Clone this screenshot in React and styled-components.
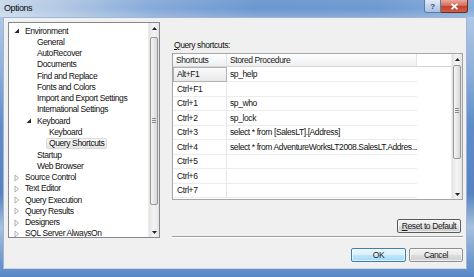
import React from 'react';
import styled, { createGlobalStyle } from 'styled-components';

const GlobalStyle = createGlobalStyle`
  html, body { margin: 0; padding: 0; }
  body {
    font-family: "Liberation Sans", Arial, sans-serif;
    font-size: 8.5px;
    color: #111;
    letter-spacing: -0.4px;
  }
`;

const treeItems = [
    { label: 'Environment', level: 0, exp: 'open' },
    { label: 'General', level: 1 },
    { label: 'AutoRecover', level: 1 },
    { label: 'Documents', level: 1 },
    { label: 'Find and Replace', level: 1 },
    { label: 'Fonts and Colors', level: 1 },
    { label: 'Import and Export Settings', level: 1 },
    { label: 'International Settings', level: 1 },
    { label: 'Keyboard', level: 1, exp: 'open' },
    { label: 'Keyboard', level: 2 },
    { label: 'Query Shortcuts', level: 2, selected: true },
    { label: 'Startup', level: 1 },
    { label: 'Web Browser', level: 1 },
    { label: 'Source Control', level: 0, exp: 'closed' },
    { label: 'Text Editor', level: 0, exp: 'closed' },
    { label: 'Query Execution', level: 0, exp: 'closed' },
    { label: 'Query Results', level: 0, exp: 'closed' },
    { label: 'Designers', level: 0, exp: 'closed' },
    { label: 'SQL Server AlwaysOn', level: 0, exp: 'closed' },
];

const shortcuts = [
    ['Alt+F1', 'sp_help'],
    ['Ctrl+F1', ''],
    ['Ctrl+1', 'sp_who'],
    ['Ctrl+2', 'sp_lock'],
    ['Ctrl+3', 'select * from [SalesLT].[Address]'],
    ['Ctrl+4', 'select * from AdventureWorksLT2008.SalesLT.Addres...'],
    ['Ctrl+5', ''],
    ['Ctrl+6', ''],
    ['Ctrl+7', ''],
];

function Expander({ type }) {
    if (type === 'open') {
        return (
            <svg width="6" height="6" viewBox="0 0 6 6">
                <path d="M5 0.5 L5 5 L0.5 5 Z" fill="#262626" />
            </svg>
        );
    }
    if (type === 'closed') {
        return (
            <svg width="6" height="8" viewBox="0 0 6 8">
                <path d="M1 1 L4.5 4 L1 7 Z" fill="#fff" stroke="#a6a6a6" strokeWidth="0.9" />
            </svg>
        );
    }
    return null;
}

function ScrollBar({ thumbTop, thumbHeight, gripAt }) {
    return (
        <VScroll>
            <ArrowBox>
                <svg width="5" height="3" viewBox="0 0 5 3"><path d="M0 3 L2.5 0 L5 3 Z" fill="#222" /></svg>
            </ArrowBox>
            <Track>
                <Thumb $top={thumbTop} $height={thumbHeight}>
                    <Grip $at={gripAt}>
                        <span /><span /><span />
                    </Grip>
                </Thumb>
            </Track>
            <ArrowBox>
                <svg width="5" height="3" viewBox="0 0 5 3"><path d="M0 0 L2.5 3 L5 0 Z" fill="#222" /></svg>
            </ArrowBox>
        </VScroll>
    );
}

function App() {
    return (
        <>
            <GlobalStyle />
            <Window>
                <TitleBar>
                    <Title>Options</Title>
                    <HelpBtn>?</HelpBtn>
                    <CloseBtn>
                        <svg width="9" height="7" viewBox="0 0 9 7">
                            <path d="M1.5 0.8 L7.5 6.2 M7.5 0.8 L1.5 6.2" stroke="#fff" strokeWidth="1.8" />
                        </svg>
                    </CloseBtn>
                </TitleBar>

                <Client>
                    <Main>
                        <Tree>
                            <TreeList>
                                {treeItems.map((item, i) => (
                                    <TreeRow key={i} $level={item.level}>
                                        <ExpSlot><Expander type={item.exp} /></ExpSlot>
                                        <TreeLabel $selected={item.selected}>{item.label}</TreeLabel>
                                    </TreeRow>
                                ))}
                            </TreeList>
                            <ScrollBar thumbTop={4} thumbHeight={168} gripAt={80} />
                        </Tree>

                        <RightPane>
                            <PaneLabel><u>Q</u>uery shortcuts:</PaneLabel>
                            <GridBox>
                                <Table>
                                    <HeaderRow>
                                        <HeadCell>Shortcuts</HeadCell>
                                        <HeadCell>Stored Procedure</HeadCell>
                                    </HeaderRow>
                                    {shortcuts.map(([key, proc], i) => (
                                        <DataRow key={i}>
                                            <KeyCell $focused={i === 0}>{key}</KeyCell>
                                            <ProcCell>{proc}</ProcCell>
                                        </DataRow>
                                    ))}
                                </Table>
                                <ScrollBar thumbTop={1} thumbHeight={94} gripAt={42} />
                            </GridBox>
                            <ResetRow>
                                <Button $width={64} $focused><u>R</u>eset to Default</Button>
                            </ResetRow>
                            <Separator />
                        </RightPane>
                    </Main>

                    <Footer>
                        <Button $width={55} $primary>OK</Button>
                        <Button $width={54}>Cancel</Button>
                    </Footer>
                </Client>
            </Window>
        </>
    );
}

const Window = styled.div`
    width: 474px;
    height: 277px;
    display: flex;
    flex-direction: column;
    overflow: hidden;
    background: linear-gradient(to bottom, #b9cfe9 0%, #8fb0db 25%, #5f8dca 45%, #5683c2 70%, #a9c0dd 82%, #6b96cd 95%, #5a88c6 100%);
`;

const TitleBar = styled.div`
    height: 17px;
    flex: none;
    display: flex;
    align-items: flex-start;
    padding-right: 6px;
    background:
        linear-gradient(to bottom, rgba(255,255,255,0.05) 0%, rgba(255,255,255,0) 50%, rgba(255,255,255,0.18) 100%),
        linear-gradient(to right, #c8d8ea 0%, #b3c9e4 12%, #86aad9 32%, #6a97d0 55%, #6e9ad1 80%, #88acd9 100%);
`;

const Title = styled.div`
    flex: 1;
    padding-left: 4px;
    line-height: 17px;
    font-size: 9px;
    color: #0b0b0b;
`;

const HelpBtn = styled.div`
    width: 17px;
    height: 13px;
    box-sizing: border-box;
    display: flex;
    align-items: center;
    justify-content: center;
    border: 1px solid #5c7ca6;
    border-top: none;
    border-radius: 0 0 0 3px;
    background: linear-gradient(to bottom, #e3ecf6 0%, #c4d5ea 50%, #a9c1e0 100%);
    color: #2c4a72;
    font-size: 8px;
    font-weight: bold;
`;

const CloseBtn = styled.div`
    width: 27px;
    height: 13px;
    box-sizing: border-box;
    display: flex;
    align-items: center;
    justify-content: center;
    border: 1px solid #6a2b22;
    border-top: none;
    border-left: none;
    border-radius: 0 0 3px 0;
    background: linear-gradient(to bottom, #e9a89b 0%, #d4705f 45%, #c3402c 55%, #d0614a 100%);
`;

const Client = styled.div`
    flex: 1;
    margin: 0 7px 8px 3px;
    display: flex;
    flex-direction: column;
    background: #f0f0f0;
    border: 1px solid #9eb6d3;
    border-bottom-color: #c9d6e6;
`;

const Main = styled.div`
    display: flex;
    height: 216px;
    margin: 4px 0 0 4px;
`;

const Tree = styled.div`
    width: 152px;
    box-sizing: border-box;
    display: flex;
    border: 1px solid #828790;
    background: #fff;
`;

const TreeList = styled.div`
    flex: 1;
    padding-top: 2.5px;
    overflow: hidden;
`;

const TreeRow = styled.div`
    height: 11.28px;
    display: flex;
    align-items: center;
    padding-left: ${p => 4 + p.$level * 12}px;
    white-space: nowrap;
`;

const ExpSlot = styled.span`
    width: 12px;
    flex: none;
    display: flex;
    align-items: center;
    padding-left: 1px;
    box-sizing: border-box;
`;

const TreeLabel = styled.span`
    margin-left: -3px;
    padding: 0 2px;
    line-height: 9px;
    border: 1px solid ${p => (p.$selected ? '#d9d9d9' : 'transparent')};
    background: ${p => (p.$selected ? 'linear-gradient(to bottom, #f8f8f8, #e5e5e5)' : 'transparent')};
    border-radius: 2px;
`;

const VScroll = styled.div`
    width: 10px;
    flex: none;
    display: flex;
    flex-direction: column;
    background: linear-gradient(to right, #e3e3e3, #f2f2f2 40%, #f2f2f2 60%, #e3e3e3);
    border-left: 1px solid #ececec;
`;

const ArrowBox = styled.div`
    height: 10px;
    flex: none;
    display: flex;
    align-items: center;
    justify-content: center;
`;

const Track = styled.div`
    flex: 1;
    position: relative;
`;

const Thumb = styled.div`
    margin: ${p => p.$top}px 0 0 0.5px;
    width: 8px;
    height: ${p => p.$height}px;
    box-sizing: border-box;
    border: 1px solid #979797;
    border-radius: 2px;
    background: linear-gradient(to right, #f5f5f5 0%, #e7e7e7 50%, #d7d7d7 100%);
    position: relative;
`;

const Grip = styled.div`
    position: absolute;
    left: 1.5px;
    top: ${p => p.$at}px;
    display: flex;
    flex-direction: column;
    gap: 1px;

    span {
        display: block;
        width: 4px;
        height: 1px;
        background: #8a8a8a;
    }
`;

const RightPane = styled.div`
    width: 291px;
    margin-left: 12px;
    display: flex;
    flex-direction: column;
`;

const PaneLabel = styled.div`
    margin-top: 18px;
    line-height: 10px;
    height: 10px;
    padding-left: 2px;
`;

const GridBox = styled.div`
    margin-top: 3px;
    height: 148px;
    box-sizing: border-box;
    display: flex;
    border: 1px solid #a5a5a5;
    background: #fff;
`;

const Table = styled.div`
    flex: 1;
    overflow: hidden;
`;

const HeaderRow = styled.div`
    display: grid;
    grid-template-columns: 54px 190px;
    height: 12px;
    border-bottom: 1px solid #d5d5d5;
`;

const HeadCell = styled.div`
    line-height: 12px;
    padding-left: 3px;
    background: linear-gradient(to bottom, #ffffff 0%, #f6f7f8 50%, #eceef0 100%);
    border-right: 1px solid #e3e3e3;
    color: #222;
`;

const DataRow = styled.div`
    display: grid;
    grid-template-columns: 54px 190px;
    height: 14.5px;
`;

const KeyCell = styled.div`
    box-sizing: border-box;
    line-height: 13px;
    padding-left: 3px;
    border: 1px solid ${p => (p.$focused ? '#b3b3b3' : 'transparent')};
    border-bottom-color: ${p => (p.$focused ? '#b3b3b3' : '#ececec')};
    border-right-color: ${p => (p.$focused ? '#b3b3b3' : '#e6e6e6')};
    background: ${p => (p.$focused ? 'linear-gradient(to bottom, #fafafa, #e9e9e9)' : 'transparent')};
`;

const ProcCell = styled.div`
    box-sizing: border-box;
    line-height: 13px;
    padding: 1px 0 0 3px;
    border-bottom: 1px solid #ececec;
    white-space: nowrap;
    overflow: hidden;
`;

const ResetRow = styled.div`
    margin-top: 19px;
    display: flex;
    justify-content: flex-end;
    padding-right: 2px;
`;

const Button = styled.div`
    width: ${p => p.$width}px;
    height: 14px;
    box-sizing: border-box;
    display: flex;
    align-items: center;
    justify-content: center;
    border-radius: 2px;
    border: 1px solid ${p => (p.$primary ? '#3c7fb1' : p.$focused ? '#5a5a5a' : '#8e8f8f')};
    background: ${p => (p.$primary
        ? 'linear-gradient(to bottom, #eaf6fd 0%, #d9f0fc 50%, #bee6fd 51%, #a7d9f5 100%)'
        : 'linear-gradient(to bottom, #f2f2f2 0%, #ebebeb 50%, #dddddd 51%, #cfcfcf 100%)')};
    box-shadow: inset 0 0 0 1px rgba(255,255,255,0.6);
    color: #1b1b1b;
`;

const Separator = styled.div`
    margin-top: 3px;
    border-top: 1px solid #a0a0a0;
    border-bottom: 1px solid #ffffff;
    height: 0;
`;

const Footer = styled.div`
    display: flex;
    justify-content: flex-end;
    gap: 3px;
    margin-top: 10px;
    padding-right: 3px;
`;

export default App;
